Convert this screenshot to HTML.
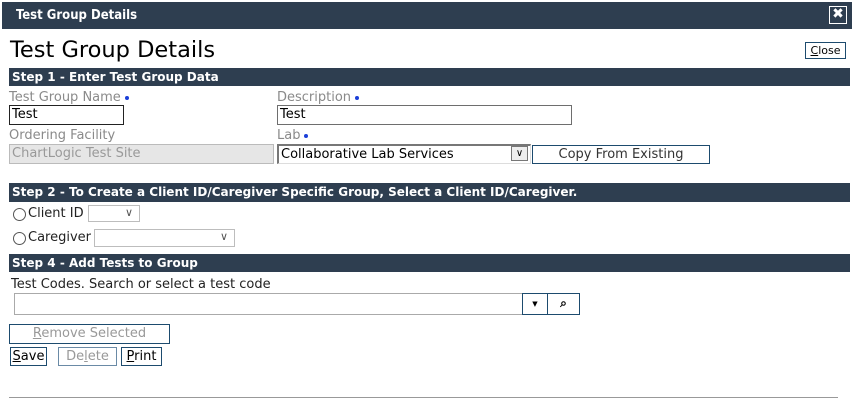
<!DOCTYPE html>
<html><head><style>
*{box-sizing:border-box;margin:0;padding:0}
body{width:855px;height:406px;background:#fff;font-family:"DejaVu Sans",Verdana,sans-serif;font-size:13px;position:relative;overflow:hidden}
.a{position:absolute}
.bar{position:absolute;left:9px;width:841px;background:#2e3e50;color:#fff;font-weight:bold;font-size:12px;line-height:18px;padding-left:3px;font-family:"DejaVu Sans",sans-serif}
.lbl{position:absolute;color:#8a8a8a;font-size:13px}
.dot{display:inline-block;width:4px;height:4px;border-radius:50%;background:#1b3fd8;margin-left:4px;vertical-align:middle}
.inp{position:absolute;border:1px solid #6e6e6e;background:#fff;font-size:13px;line-height:17px;padding-left:2px}
.btn{position:absolute;border:1px solid #1d4b6e;background:#fff;text-align:center;font-size:13px}
.sel{position:absolute;border:1px solid #bdbdbd;background:#fff}
.chev{position:absolute;right:6px;top:0px;color:#555;font-size:11px}
</style></head><body>
<div class="a" style="left:2px;top:2px;width:850px;height:27px;background:#2e3e50"></div>
<div class="a" style="left:16px;top:8px;color:#fff;font-weight:bold;font-size:13px;font-family:'DejaVu Sans Condensed','DejaVu Sans',sans-serif">Test Group Details</div>
<div class="a" style="left:829px;top:6px;width:18px;height:18px;border:1px solid #fff;background:#2e3e50;color:#fff;font-size:14px;font-weight:bold;text-align:center;line-height:15px">✖</div>
<div class="a" style="left:10px;top:37px;font-size:22.5px;color:#000">Test Group Details</div>
<div class="btn" style="left:805px;top:42px;width:41px;height:17px;font-size:11px;line-height:15px"><u>C</u>lose</div>
<div class="bar" style="top:68px;height:18px">Step 1 - Enter Test Group Data</div>
<div class="lbl" style="left:9px;top:90px">Test Group Name<span class="dot"></span></div>
<div class="inp" style="left:9px;top:105px;width:115px;height:20px;border-color:#222">Test</div>
<div class="lbl" style="left:277px;top:90px">Description<span class="dot"></span></div>
<div class="inp" style="left:277px;top:105px;width:295px;height:20px">Test</div>
<div class="lbl" style="left:9px;top:128px">Ordering Facility</div>
<div class="inp" style="left:9px;top:144px;width:265px;height:20px;background:#e6e6e6;border-color:#bbb;color:#999">ChartLogic Test Site</div>
<div class="lbl" style="left:277px;top:128px">Lab<span class="dot"></span></div>
<div class="inp" style="left:277px;top:144px;width:254px;height:20px;border-color:#777 #ddd #ddd #777;border-width:2px 1px 1px 2px">Collaborative Lab Services</div>
<div class="a" style="left:511px;top:146px;width:17px;height:15px;border:1px solid #777;background:#eee;text-align:center;font-size:10px;line-height:13px">&#x2228;</div>
<div class="btn" style="left:532px;top:145px;width:178px;height:19px;line-height:17px;color:#333">Copy From Existing</div>
<div class="bar" style="top:183px;height:19px">Step 2 - To Create a Client ID/Caregiver Specific Group, Select a Client ID/Caregiver.</div>
<div class="a" style="left:13px;top:208px;width:13px;height:13px;border:1px solid #555;border-radius:50%"></div>
<div class="a" style="left:28px;top:206px;color:#222">Client ID</div>
<div class="sel" style="left:88px;top:205px;width:52px;height:17px"><span class="chev">&#x2228;</span></div>
<div class="a" style="left:13px;top:232px;width:13px;height:13px;border:1px solid #555;border-radius:50%"></div>
<div class="a" style="left:28px;top:230px;color:#222">Caregiver</div>
<div class="sel" style="left:94px;top:229px;width:141px;height:18px"><span class="chev">&#x2228;</span></div>
<div class="bar" style="top:254px;height:18px">Step 4 - Add Tests to Group</div>
<div class="a" style="left:11px;top:277px;color:#222">Test Codes. Search or select a test code</div>
<div class="a" style="left:14px;top:293px;width:509px;height:22px;border:1px solid #aaa"></div>
<div class="btn" style="left:522px;top:293px;width:26px;height:22px;font-size:7px;line-height:20px">▼</div>
<div class="btn" style="left:547px;top:293px;width:33px;height:22px;font-size:12px;line-height:19px;font-weight:bold">&#x2315;</div>
<div class="btn" style="left:9px;top:324px;width:161px;height:20px;line-height:18px;color:#999"><u>R</u>emove Selected</div>
<div class="btn" style="left:10px;top:347px;width:37px;height:19px;line-height:17px"><u>S</u>ave</div>
<div class="btn" style="left:58px;top:347px;width:59px;height:19px;line-height:17px;color:#999;border-color:#6a8aa6">De<u>l</u>ete</div>
<div class="btn" style="left:121px;top:347px;width:41px;height:19px;line-height:17px"><u>P</u>rint</div>
<div class="a" style="left:9px;top:397px;width:829px;height:1px;background:#999"></div>
</body></html>
